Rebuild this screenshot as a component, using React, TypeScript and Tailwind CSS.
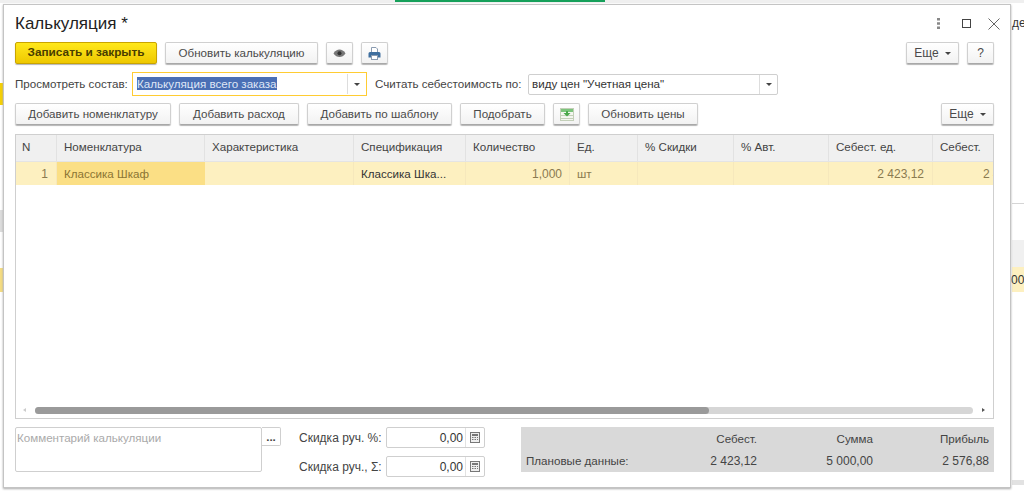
import React from 'react';

const columns = [
  { title: 'N', width: 'w-[41px] pl-[6px]' },
  { title: 'Номенклатура', width: 'w-[148px] pl-[7px]' },
  { title: 'Характеристика', width: 'w-[149px] pl-[7px]' },
  { title: 'Спецификация', width: 'w-[112px] pl-[7px]' },
  { title: 'Количество', width: 'w-[104px] pl-[7px]' },
  { title: 'Ед.', width: 'w-[68px] pl-[7px]' },
  { title: '% Скидки', width: 'w-[96px] pl-[7px]' },
  { title: '% Авт.', width: 'w-[95px] pl-[7px]' },
  { title: 'Себест. ед.', width: 'w-[104px] pl-[7px]' },
  { title: 'Себест.', width: 'flex-1 pl-[7px]' },
];

function Caret() {
  return <span className="inline-block h-0 w-0 border-x-[3px] border-t-[3px] border-x-transparent border-t-[#444]" />;
}

function Btn({ children, className = '' }: { children: React.ReactNode; className?: string }) {
  return (
    <button className={`flex h-[22px] shrink-0 items-center justify-center rounded-[2px] border border-[#d0d0d0] border-b-[#a8a8a8] bg-gradient-to-b from-white to-[#f2f2f2] text-[#4a4a4a] shadow-[0_1px_1px_#b5b5b5] ${className}`}>
      {children}
    </button>
  );
}

function NumberField({ label }: { label: string }) {
  return (
    <div className="flex h-[21px] items-center">
      <span className="w-[87px] text-[12px] text-[#444]">{label}</span>
      <div className="flex h-[21px] w-[99px] items-center rounded-[2px] border border-[#cfcfcf]">
        <span className="flex-1 pr-[2px] text-right text-[12px] text-[#333]">0,00</span>
        <div className="flex h-full w-[19px] items-center justify-center border-l border-[#e2e2e2]">
          <svg width="10" height="11" viewBox="0 0 10 11">
            <rect x="0.5" y="0.5" width="9" height="10" fill="#eee" stroke="#777" />
            <rect x="2" y="2" width="6" height="2" fill="#777" />
            <path d="M2 5.5h1.5M4.5 5.5H6M7 5.5h1M2 7.5h1.5M4.5 7.5H6M7 7.5h1" stroke="#777" />
          </svg>
        </div>
      </div>
    </div>
  );
}

export default function App() {
  return (
    <div className="relative h-[491px] w-[1024px] overflow-hidden bg-white font-['Liberation_Sans',Arial,sans-serif] text-[11.6px]">
      {/* what is left visible of the page under the dialog */}
      <div className="absolute left-0 top-0 h-[3px] w-full bg-[#efefef]" />
      <div className="absolute left-[395px] top-0 h-[2px] w-[210px] bg-[#16a05a]" />
      <div className="absolute left-0 top-[83px] h-[22px] w-[3px] bg-[#f6d000]" />
      <div className="absolute left-0 top-[210px] h-[22px] w-[3px] bg-[#dcdcdc]" />
      <div className="absolute left-0 top-[268px] h-[24px] w-[3px] bg-[#f5dc80]" />
      <div className="absolute left-[1012px] top-[203px] h-px w-[12px] bg-[#d5d5d5]" />
      <div className="absolute left-[1012px] top-[240px] h-[27px] w-[12px] bg-[#f0f0f0]" />
      <div className="absolute left-[1012px] top-[267px] h-[25px] w-[12px] bg-[#fdf0c0]" />
      <div className="absolute left-[1012px] top-[14px] text-[12px] text-[#333]">ден</div>
      <div className="absolute left-[1011px] top-[271px] text-[12px] text-[#333]">00</div>
      <div className="absolute left-[1012px] top-[480px] h-[5px] w-[12px] bg-[#e2e2e2]" />

      {/* dialog */}
      <div className="absolute left-[3px] top-[4px] flex h-[484px] w-[1008px] flex-col border border-[#c4c4c4] bg-white pl-[11px] pr-[16px] shadow-[0_1px_2px_#aaa]">
        <div className="flex h-[37px] shrink-0 items-center justify-between">
          <h1 className="text-[17px] text-[#222]">Калькуляция *</h1>
          <div className="-mr-[6px] flex items-center text-[#555]">
            <svg width="3" height="11" viewBox="0 0 3 11" className="mr-[22px]">
              <path d="M0 0h3v2.500H0zM0 4.250h3v2.500H0zM0 8.500h3V11H0z" fill="#888" />
            </svg>
            <div className="mr-[17px] h-[9px] w-[9px] border-[1.5px] border-[#444]" />
            <svg width="12" height="12" viewBox="0 0 12 12">
              <path d="M0.500 0.500l11 11M11.500 0.500l-11 11" stroke="#666" strokeWidth="1" fill="none" />
            </svg>
          </div>
        </div>

        <div className="flex h-[23px] shrink-0 items-start">
          <button className="flex h-[22px] w-[142px] shrink-0 items-center justify-center rounded-[2px] border border-[#c9a400] bg-gradient-to-b from-[#ffe81a] to-[#eec800] text-[11.8px] font-bold text-[#4a3d00] shadow-[0_1px_1px_#b5b5b5]">
            Записать и закрыть
          </button>
          <Btn className="ml-[8px] w-[153px]">Обновить калькуляцию</Btn>
          <Btn className="ml-[8px] w-[27px]">
            <svg width="13" height="9" viewBox="0 0 13 9">
              <path d="M0.500 4.500C2 1.500 4.500 0.500 6.500 0.500S11 1.500 12.500 4.500C11 7 8.500 8 6.500 8S2 7 0.500 4.500Z" fill="#777" />
              <circle cx="6.500" cy="4.200" r="2" fill="#333" />
            </svg>
          </Btn>
          <Btn className="ml-[8px] w-[27px]">
            <svg width="13" height="13" viewBox="0 0 13 13">
              <path d="M3.500 5V0.500h4.500L9.500 2v3" fill="#fff" stroke="#8a9bb0" />
              <path d="M0.500 6.500a1.500 1.500 0 0 1 1.500-1.500h9a1.500 1.500 0 0 1 1.500 1.500v4h-3v-2h-6v2h-3Z" fill="#3f6f9f" />
              <rect x="3.500" y="8.500" width="6" height="4" fill="#fff" stroke="#8a9bb0" />
            </svg>
          </Btn>
          <Btn className="ml-auto w-[53px] gap-[6px] text-[12px]">Еще <Caret /></Btn>
          <Btn className="ml-[8px] w-[27px] text-[12px]">?</Btn>
        </div>

        <div className="mt-[7px] flex h-[24px] shrink-0 items-center">
          <span className="w-[117px] whitespace-nowrap text-[#444]">Просмотреть состав:</span>
          <div className="flex h-[24px] w-[235px] items-center border border-[#ffcc33] pl-[4px]">
            <span className="flex-1"><span className="bg-[#4a6fb5] text-[#dfe6f5]">Калькуляция всего заказа</span></span>
            <div className="flex h-[20px] w-[19px] items-center justify-center border-l border-[#ddd]"><Caret /></div>
          </div>
          <span className="ml-[8px] w-[153px] whitespace-nowrap text-[#444]">Считать себестоимость по:</span>
          <div className="flex h-[21px] w-[250px] items-center rounded-[2px] border border-[#cfcfcf] pl-[3px] text-[#333]">
            <span className="flex-1">виду цен "Учетная цена"</span>
            <div className="flex h-full w-[18px] items-center justify-center border-l border-[#ddd]"><Caret /></div>
          </div>
        </div>

        <div className="mt-[7px] flex h-[23px] shrink-0 items-start">
          <Btn className="w-[156px]">Добавить номенклатуру</Btn>
          <Btn className="ml-[8px] w-[120px]">Добавить расход</Btn>
          <Btn className="ml-[8px] w-[145px]">Добавить по шаблону</Btn>
          <Btn className="ml-[8px] w-[85px]">Подобрать</Btn>
          <Btn className="ml-[8px] w-[27px]">
            <svg width="14" height="13" viewBox="0 0 14 13">
              <rect x="0.500" y="0.500" width="13" height="12" fill="#f4f6f0" stroke="#c3cfb8" />
              <rect x="1" y="1" width="12" height="3" fill="#7cc47c" />
              <path d="M1 7.500h12M1 10.500h12" stroke="#c3cfb8" />
              <path d="M6 3h2v2h2.500L7 8.500 3.500 5H6Z" fill="#4aa84a" />
            </svg>
          </Btn>
          <Btn className="ml-[8px] w-[110px]">Обновить цены</Btn>
          <Btn className="ml-auto w-[53px] gap-[6px] text-[12px]">Еще <Caret /></Btn>
        </div>

        <div className="mt-[8px] flex h-[285px] shrink-0 flex-col border border-[#cfcfcf]">
          <div className="flex h-[26px] shrink-0 bg-[#f0f0f0] text-[#444]">
            {columns.map((c) => (
              <div key={c.title} className={`${c.width} flex items-center overflow-hidden whitespace-nowrap border-r border-[#e2e2e2] pb-[2px] last:border-r-0`}>
                {c.title}
              </div>
            ))}
          </div>
          <div className="flex h-[24px] shrink-0 border-t border-[#e4e4e4] bg-[#fdf0c0] text-[#8a7a50]">
            <div className="flex w-[41px] items-center justify-end border-r border-[#f6e8bc] pr-[8px] text-[12px]">1</div>
            <div className="flex w-[148px] items-center bg-[#fbdf85] pl-[7px] text-[#8a7433]">Классика Шкаф</div>
            <div className="w-[149px] border-r border-[#f6e8bc]" />
            <div className="flex w-[112px] items-center border-r border-[#f6e8bc] pl-[7px] text-[#333]">Классика Шка...</div>
            <div className="flex w-[104px] items-center justify-end border-r border-[#f6e8bc] pr-[7px] text-[12px]">1,000</div>
            <div className="flex w-[68px] items-center border-r border-[#f6e8bc] pl-[7px]">шт</div>
            <div className="w-[96px] border-r border-[#f6e8bc]" />
            <div className="w-[95px] border-r border-[#f6e8bc]" />
            <div className="flex w-[104px] items-center justify-end border-r border-[#f6e8bc] pr-[8px] text-[12px]">2 423,12</div>
            <div className="flex flex-1 items-center overflow-hidden whitespace-nowrap pl-[50px] text-[12px]">2 423,12</div>
          </div>
          <div className="flex-1" />
          <div className="flex h-[10px] shrink-0 items-center pl-[7px] pr-[8px]">
            <span className="h-0 w-0 border-y-[2px] border-r-[3px] border-y-transparent border-r-[#ccc]" />
            <div className="ml-[9px] flex h-[7px] flex-1 rounded-full bg-[#d6d6d6]">
              <div className="h-full w-[674px] rounded-full bg-[#9a9a9a]" />
            </div>
            <span className="ml-[9px] h-0 w-0 border-y-[2px] border-l-[3px] border-y-transparent border-l-[#555]" />
          </div>
          <div className="h-[3px] shrink-0" />
        </div>

        <div className="mt-[8px] flex shrink-0 items-start">
          <div className="flex h-[45px] w-[247px] rounded-[2px] border border-[#cfcfcf] pl-[1px] pt-[1px] text-[#aaa]">
            Комментарий калькуляции
          </div>
          <div className="flex h-[19px] w-[19px] items-center justify-center rounded-r-[2px] border border-l-0 border-[#cfcfcf] font-bold leading-none text-[#444]">...</div>
          <div className="ml-[18px] flex flex-col gap-[8px]">
            <NumberField label="Скидка руч. %:" />
            <NumberField label="Скидка руч., Σ:" />
          </div>
          <div className="ml-[36px] flex h-[45px] flex-1 flex-col justify-between bg-[#d9d9d9] px-[5px] pb-[4px] pt-[5px] leading-[14px] text-[#444]">
            <div className="flex">
              <span className="w-[158px]" />
              <span className="w-[73px] text-right">Себест.</span>
              <span className="w-[116px] text-right">Сумма</span>
              <span className="w-[116px] text-right">Прибыль</span>
            </div>
            <div className="flex">
              <span className="w-[158px] whitespace-nowrap">Плановые данные:</span>
              <span className="w-[73px] text-right text-[12px]">2 423,12</span>
              <span className="w-[116px] text-right text-[12px]">5 000,00</span>
              <span className="w-[116px] text-right text-[12px]">2 576,88</span>
            </div>
          </div>
        </div>
      </div>
    </div>
  );
}
